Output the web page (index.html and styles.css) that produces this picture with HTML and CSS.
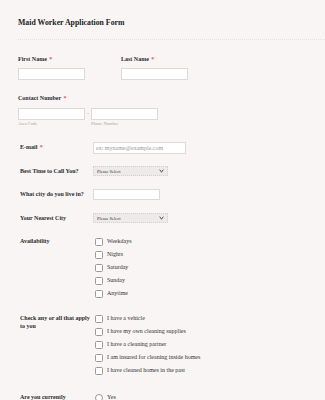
FILE: index.html
```html
<!DOCTYPE html>
<html>
<head>
<meta charset="utf-8">
<link rel="stylesheet" href="styles.css">
</head>
<body>
<div class="page">
  <div class="header">
    <h1 class="title">Maid Worker Application Form</h1>
  </div>

  <div class="name-row">
    <div class="name-col">
      <div class="label">First Name <span class="req">*</span></div>
      <div class="input name-input"></div>
    </div>
    <div class="name-col">
      <div class="label">Last Name <span class="req">*</span></div>
      <div class="input name-input"></div>
    </div>
  </div>

  <div class="contact">
    <div class="label">Contact Number <span class="req">*</span></div>
    <div class="phone-row">
      <div class="phone-part">
        <div class="input name-input"></div>
        <div class="sublabel">Area Code</div>
      </div>
      <div class="dash">-</div>
      <div class="phone-part">
        <div class="input name-input"></div>
        <div class="sublabel">Phone Number</div>
      </div>
    </div>
  </div>

  <div class="row row-email">
    <div class="label side">E-mail <span class="req">*</span></div>
    <div class="input email-input"><span class="placeholder">ex: myname@example.com</span></div>
  </div>

  <div class="row">
    <div class="label side">Best Time to Call You?</div>
    <div class="select"><span>Please Select</span>
      <svg class="chev" viewBox="0 0 6 4" width="5" height="4"><path d="M0.7 0.8 L3 3 L5.3 0.8" fill="none" stroke="#222" stroke-width="1.2"/></svg>
    </div>
  </div>

  <div class="row">
    <div class="label side">What city do you live in?</div>
    <div class="input city-input"></div>
  </div>

  <div class="row">
    <div class="label side">Your Nearest City</div>
    <div class="select"><span>Please Select</span>
      <svg class="chev" viewBox="0 0 6 4" width="5" height="4"><path d="M0.7 0.8 L3 3 L5.3 0.8" fill="none" stroke="#222" stroke-width="1.2"/></svg>
    </div>
  </div>

  <div class="group group-avail">
    <div class="label side top">Availability</div>
    <div class="options">
      <div class="opt"><span class="box"></span>Weekdays</div>
      <div class="opt"><span class="box"></span>Nights</div>
      <div class="opt"><span class="box"></span>Saturday</div>
      <div class="opt"><span class="box"></span>Sunday</div>
      <div class="opt"><span class="box"></span>Anytime</div>
    </div>
  </div>

  <div class="group group-apply">
    <div class="label side top">Check any or all that apply to you</div>
    <div class="options">
      <div class="opt"><span class="box"></span>I have a vehicle</div>
      <div class="opt"><span class="box"></span>I have my own cleaning supplies</div>
      <div class="opt"><span class="box"></span>I have a cleaning partner</div>
      <div class="opt"><span class="box"></span>I am insured for cleaning inside homes</div>
      <div class="opt"><span class="box"></span>I have cleaned homes in the past</div>
    </div>
  </div>

  <div class="group group-current">
    <div class="label side top">Are you currently</div>
    <div class="options">
      <div class="opt"><span class="box radio"></span>Yes</div>
    </div>
  </div>
</div>
</body>
</html>
```

FILE: styles.css
```css
html, body {
  margin: 0;
  padding: 0;
  background: #f8f5f4;
}
body {
  font-family: "Liberation Serif", "Times New Roman", serif;
  color: #2b2b2b;
  overflow: hidden;
  height: 400px;
}
.page {
  padding-left: 18px;
}
.header {
  padding-top: 18px;
  padding-bottom: 11px;
  border-bottom: 1px dotted #e6e1e0;
}
.title {
  margin: 0;
  font-size: 7.8px;
  line-height: 10px;
  font-weight: bold;
  color: #222;
}
.label {
  font-size: 6px;
  line-height: 7px;
  font-weight: bold;
  color: #2b2b2b;
  white-space: nowrap;
}
.req {
  color: #f2575a;
  margin-left: 1px;
}
.input {
  background: #fff;
  border: 1px solid #dedada;
  box-sizing: border-box;
}
.name-row {
  display: flex;
  margin-top: 16px;
}
.name-col {
  width: 103px;
}
.name-col .label {
  margin-bottom: 4.5px;
}
.name-input {
  width: 67px;
  height: 12px;
}
.contact {
  margin-top: 15.5px;
}
.contact .label {
  margin-bottom: 5.5px;
}
.phone-row {
  display: flex;
  align-items: flex-start;
}
.dash {
  width: 6px;
  text-align: center;
  font-size: 5px;
  line-height: 12px;
  color: #555;
}
.sublabel {
  font-size: 4.5px;
  line-height: 6px;
  color: #a8a4a4;
  margin-top: 1px;
}
.row {
  display: flex;
  align-items: center;
  height: 12px;
  margin-top: 11.5px;
  padding-left: 2px;
}
.row-email {
  margin-top: 15px;
}
.side {
  width: 73px;
  flex: none;
}
.email-input {
  width: 93px;
  height: 12px;
  display: flex;
  align-items: center;
  padding-left: 2px;
}
.placeholder {
  font-size: 6px;
  color: #9d9999;
  white-space: nowrap;
}
.city-input {
  width: 67px;
  height: 11px;
}
.select {
  width: 75px;
  height: 10px;
  box-sizing: border-box;
  background: #eeeaea;
  border: 1px dotted #d3cfcf;
  display: flex;
  align-items: center;
  justify-content: space-between;
  padding: 0 3px 0 3px;
  font-size: 4.5px;
  color: #333;
  white-space: nowrap;
}
.chev {
  display: block;
}
.group {
  display: flex;
  align-items: flex-start;
  padding-left: 2px;
}
.group-avail {
  margin-top: 10px;
}
.group-apply {
  margin-top: 12px;
}
.group-current {
  margin-top: 14px;
}
.side.top {
  margin-top: 3px;
  white-space: normal;
  line-height: 8px;
  width: 73px;
  padding-right: 3px;
  box-sizing: border-box;
}
.options {
  display: flex;
  flex-direction: column;
}
.opt {
  display: flex;
  align-items: center;
  height: 13px;
  font-size: 6px;
  color: #333;
  white-space: nowrap;
}
.box {
  width: 8px;
  height: 8px;
  box-sizing: border-box;
  border: 1px solid #9b9898;
  border-radius: 1.5px;
  background: #fff;
  margin-left: 2px;
  margin-right: 4px;
  margin-top: 2px;
}
.radio {
  border-radius: 50%;
}
```
